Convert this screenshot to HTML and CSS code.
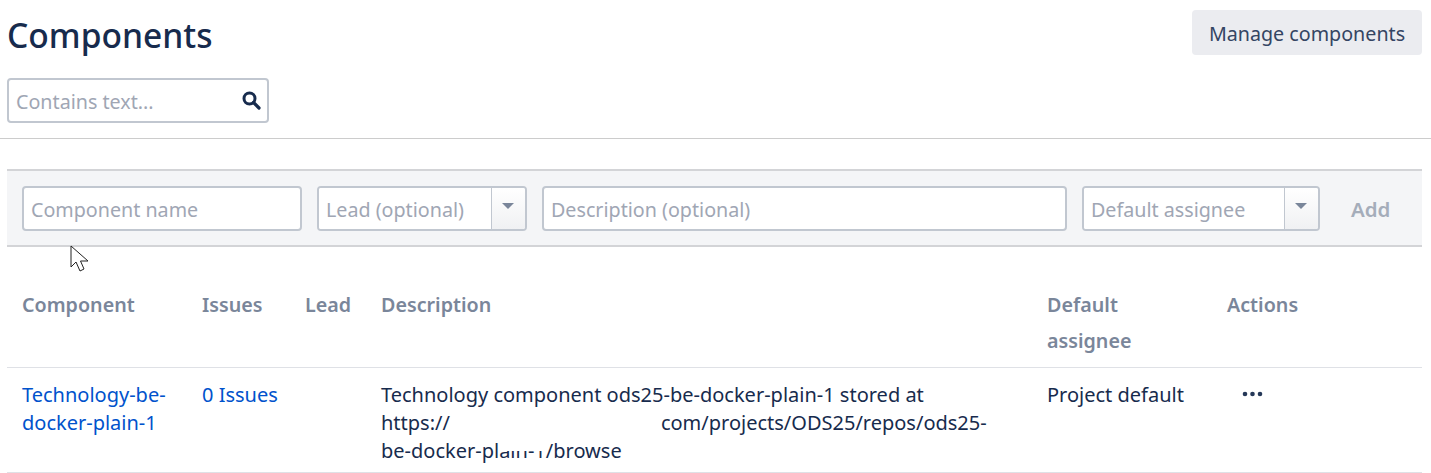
FILE: index.html

```html
<!DOCTYPE html>
<html lang="en">
<head>
  <meta charset="UTF-8">
  <title>Components</title>
  <link rel="stylesheet" href="styles.css">
</head>
<body>

<header class="page-header">
  <h1>Components</h1>
  <button class="manage-button">Manage components</button>
</header>

<div class="filter-row">
  <div class="search-box">
    <input class="text-input" placeholder="Contains text...">
    <svg class="search-icon" width="20" height="20" viewBox="0 0 20 20">
      <circle cx="8.5" cy="8.5" r="5.5" fill="none" stroke="#172b4d" stroke-width="3"/>
      <path d="M12.5 12.5 L18 18" stroke="#172b4d" stroke-width="3.2" stroke-linecap="round"/>
    </svg>
  </div>
</div>

<form class="add-form">
  <input class="text-input name-field" placeholder="Component name">
  <div class="select-field lead-field">
    <input class="text-input" placeholder="Lead (optional)">
    <span class="select-arrow"></span>
  </div>
  <input class="text-input desc-field" placeholder="Description (optional)">
  <div class="select-field assignee-field">
    <input class="text-input" placeholder="Default assignee">
    <span class="select-arrow"></span>
  </div>
  <span class="add-button">Add</span>
</form>

<table class="components">
  <colgroup>
    <col class="col-name">
    <col class="col-issues">
    <col class="col-lead">
    <col class="col-desc">
    <col class="col-assignee">
    <col>
  </colgroup>
  <thead>
    <tr>
      <th>Component</th>
      <th>Issues</th>
      <th>Lead</th>
      <th>Description</th>
      <th>Default assignee</th>
      <th>Actions</th>
    </tr>
  </thead>
  <tbody>
    <tr>
      <td><a href="#">Technology-be-docker-plain-1</a></td>
      <td class="issues-cell"><a href="#">0 Issues</a></td>
      <td></td>
      <td class="desc-cell">Technology component ods25-be-docker-plain-1 stored at <span class="url-line">https://<span class="redacted"></span>com/projects/ODS25/repos/ods25-</span>be-docker-<span class="smudged">plain-1</span>/browse</td>
      <td>Project default</td>
      <td>
        <svg class="more-actions" width="22" height="6" viewBox="0 0 22 6">
          <circle cx="3" cy="3" r="2.3" fill="#253858"/>
          <circle cx="10.5" cy="3" r="2.3" fill="#253858"/>
          <circle cx="18" cy="3" r="2.3" fill="#253858"/>
        </svg>
      </td>
    </tr>
  </tbody>
</table>

<svg class="cursor" width="20" height="28" viewBox="0 0 20 28">
  <path d="M1 1 L1 22 L6 17 L10 26 L14 24 L10.5 16 L18 16 Z" fill="#fff" stroke="#222" stroke-width="1"/>
</svg>

</body>
</html>
```

FILE: styles.css

```css
* { box-sizing: border-box; }
html, body {
  height: 100%;
  overflow: hidden;
}
body {
  position: relative;
  margin: 0;
  padding: 10px 9px 0 7px;
  background: #fff;
  color: #172b4d;
  font-family: "Noto Sans", Arial, sans-serif;
  font-size: 20px;
}
.page-header {
  display: flex;
  justify-content: space-between;
  align-items: flex-start;
  height: 68px;
}
h1 {
  margin: 0;
  font-size: 33.6px;
  line-height: 50px;
  font-weight: 500;
}
.manage-button {
  width: 230px;
  height: 45px;
  padding: 2px 0 0;
  border: none;
  border-radius: 4px;
  background: #ebecf0;
  color: #344563;
  font: inherit;
  font-size: 19.7px;
}
.filter-row {
  height: 61px;
  border-bottom: 1px solid #ccc;
  margin: 0 -9px 30px -7px;
  padding-left: 7px;
}
.text-input {
  width: 100%;
  height: 45px;
  padding: 3px 7px 0;
  border: 2px solid #c1c7d0;
  border-radius: 4px;
  background: #fff;
  color: #172b4d;
  font: inherit;
  font-size: 19.7px;
  outline: none;
}
.text-input::placeholder {
  color: #a0a6b4;
  opacity: 1;
}
.search-box {
  position: relative;
  width: 262px;
}
.search-box .text-input { padding-top: 1px; }
.search-icon {
  position: absolute;
  top: 12px;
  right: 8px;
}
.add-form {
  display: flex;
  align-items: center;
  gap: 15px;
  height: 78px;
  padding: 0 0 0 15px;
  background: #f4f5f7;
  border-top: 2px solid #d3d4d7;
  border-bottom: 2px solid #d3d4d7;
}
.name-field { width: 280px; }
.lead-field { width: 210px; }
.desc-field { width: 525px; }
.assignee-field { width: 238px; }
.select-field {
  display: flex;
  height: 45px;
  border: 2px solid #c1c7d0;
  border-radius: 4px;
  background: #fff;
  overflow: hidden;
}
.select-field .text-input {
  flex: 1;
  min-width: 0;
  height: 41px;
  padding: 3px 7px 0;
  border: none;
  border-radius: 0;
}
.select-arrow {
  position: relative;
  flex: none;
  width: 34px;
  border-left: 1px solid #c1c7d0;
  background: linear-gradient(#fff, #f0f1f3);
}
.select-arrow::after {
  content: "";
  position: absolute;
  top: 15px;
  left: 10px;
  border-left: 6px solid transparent;
  border-right: 6px solid transparent;
  border-top: 6px solid #7a869a;
}
.add-button {
  margin-left: 16px;
  padding-top: 2px;
  color: #a5adba;
  font-size: 20.5px;
  font-weight: 600;
}
.components {
  width: 100%;
  table-layout: fixed;
  border-collapse: collapse;
}
.col-name { width: 180px; }
.col-issues { width: 103px; }
.col-lead { width: 76px; }
.col-desc { width: 666px; }
.col-assignee { width: 180px; }
th, td {
  padding: 0 15px;
  text-align: left;
  vertical-align: top;
}
th {
  padding-top: 40px;
  padding-bottom: 8px;
  color: #7a869a;
  font-size: 19.7px;
  font-weight: 600;
  line-height: 36px;
}
thead tr { border-bottom: 1px solid #dfe1e6; }
tbody tr { border-bottom: 1px solid #dfe1e6; }
td {
  padding-top: 13px;
  padding-bottom: 7px;
  line-height: 28px;
}
th:first-child, td:first-child { padding-right: 0; }
.issues-cell { white-space: nowrap; }
.desc-cell { padding-right: 25px; }
a {
  color: #0052cc;
  text-decoration: none;
}
.url-line { white-space: nowrap; }
.redacted {
  display: inline-block;
  width: 211px;
}
.smudged { position: relative; }
.smudged::after {
  content: "";
  position: absolute;
  top: 3px;
  left: 17px;
  width: 43px;
  height: 11px;
  background: #fff;
}
.more-actions {
  display: block;
  margin: 10px 0 0 15px;
}
.cursor {
  position: absolute;
  top: 245px;
  left: 70px;
}
```
